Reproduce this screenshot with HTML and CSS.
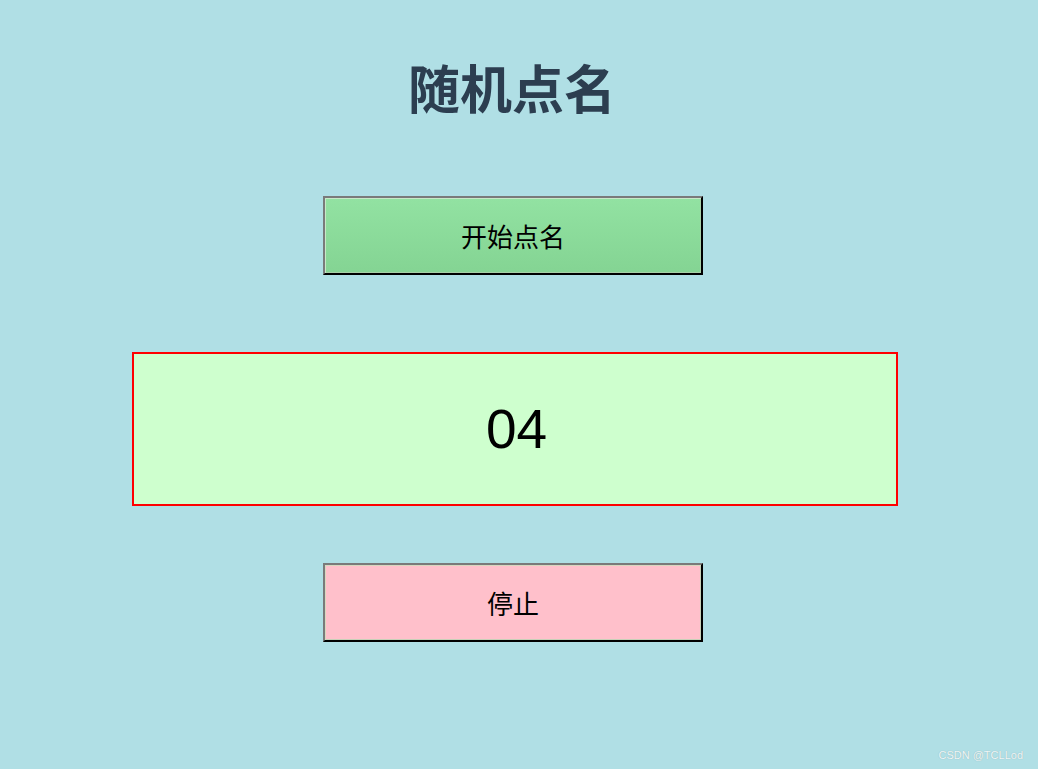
FILE: index.html
```html
<!DOCTYPE html>
<html lang="zh">
<head>
<meta charset="utf-8">
<title>随机点名</title>
<link rel="stylesheet" href="styles.css">
</head>
<body>
<main class="page">
  <h1 class="title">随机点名</h1>
  <button class="btn btn-start">开始点名</button>
  <div class="display">04</div>
  <button class="btn btn-stop">停止</button>
</main>
<div class="watermark">CSDN @TCLLod</div>
</body>
</html>
```
FILE: styles.css
```css
html, body {
  margin: 0;
  padding: 0;
  height: 100%;
}
body {
  background: #b0dfe5;
  font-family: "Noto Sans CJK SC", "Noto Sans", sans-serif;
  overflow: hidden;
}
.page {
  width: 1026px;
  display: flex;
  flex-direction: column;
  align-items: center;
  padding-top: 57px;
}
.title {
  margin: 0 0 0 -2px;
  font-size: 52px;
  line-height: 60px;
  height: 60px;
  font-weight: 700;
  color: #2c3e50;
}
.btn {
  box-sizing: border-box;
  width: 380px;
  height: 79px;
  border: 2px outset #d8d8d8;
  border-color: #7a7a7a #2a2a2a #2a2a2a #7a7a7a;
  font-family: "Noto Sans CJK SC", sans-serif;
  font-size: 26px;
  color: #000;
  padding: 0;
  box-shadow: inset 1px 1px 0 #c8e8c8, inset -1px -1px 0 #a8d0a8;
}
.btn-start {
  margin-top: 79px;
  background: linear-gradient(#92e2a2, #84d493);
}
.btn-stop {
  margin-top: 57px;
  background: #ffc0cb;
  box-shadow: inset 1px 1px 0 #d8d8c0, inset -1px -1px 0 #c8d0b8;
}
.display {
  box-sizing: border-box;
  margin-top: 77px;
  margin-left: 4px;
  width: 766px;
  height: 154px;
  border: 2px solid #ff0000;
  background: #ceffce;
  display: flex;
  align-items: center;
  justify-content: center;
  font-family: "Liberation Sans", Arial, sans-serif;
  font-size: 55px;
  color: #000;
  padding-left: 3px;
}
.watermark {
  position: absolute;
  right: 15px;
  bottom: 8px;
  font-family: "Liberation Sans", Arial, sans-serif;
  font-size: 11px;
  color: #eef6f8;
  text-shadow: 0 0 1px #8aa;
}
```
